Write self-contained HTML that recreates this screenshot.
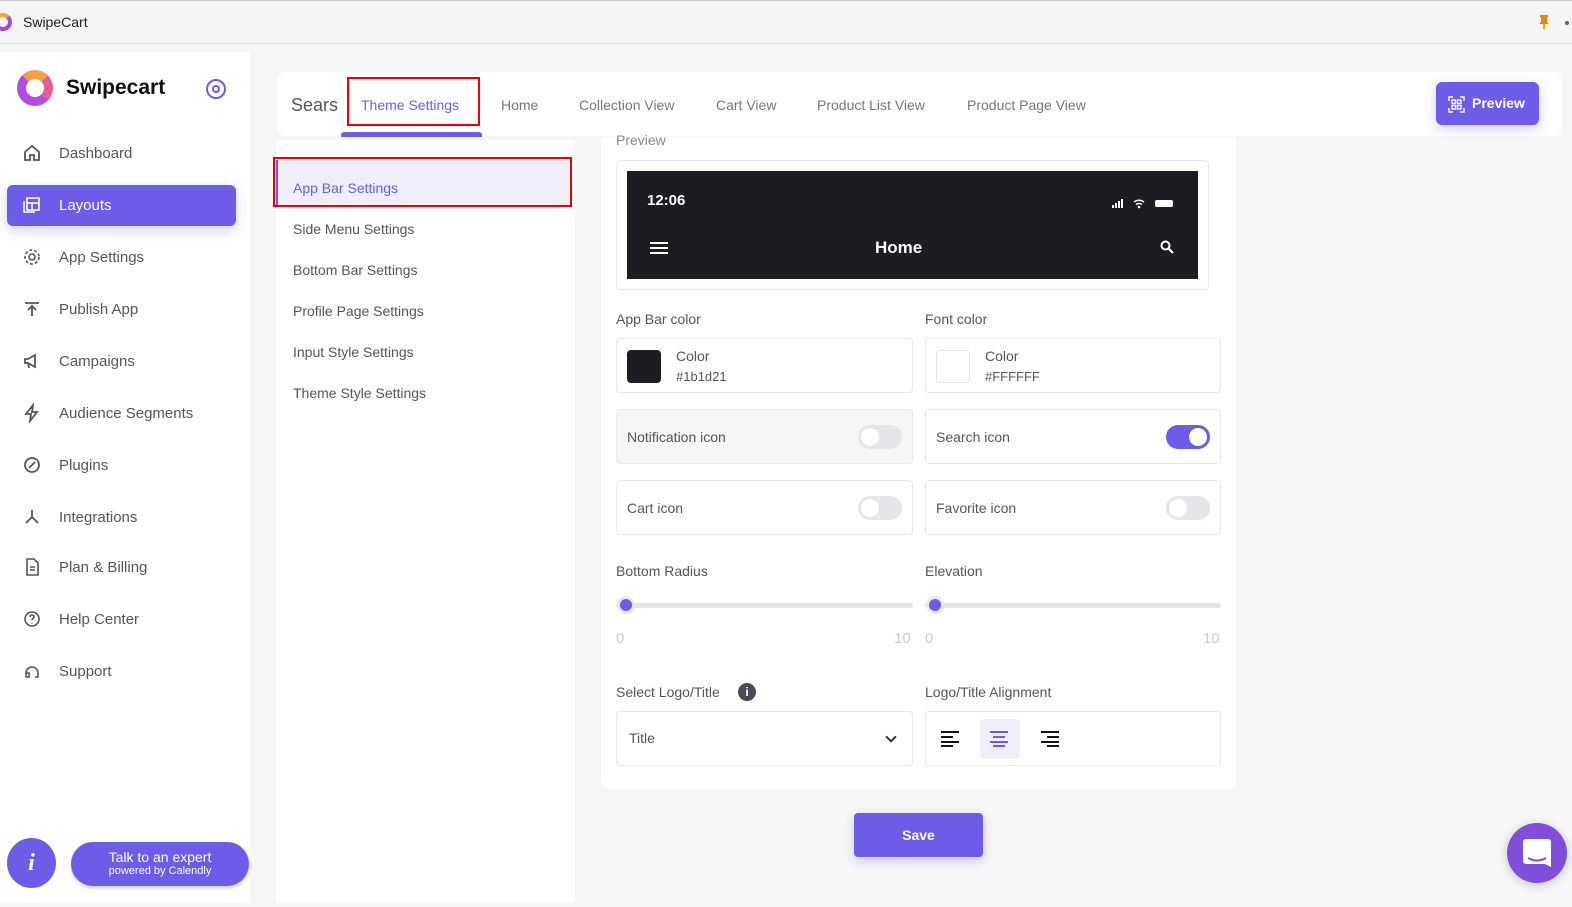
<!DOCTYPE html>
<html><head><meta charset="utf-8"><style>
*{box-sizing:border-box;margin:0;padding:0}
body{width:1572px;height:907px;background:#f6f6f6;font-family:"Liberation Sans",sans-serif;position:relative;overflow:hidden;color:#444}
.abs{position:absolute}
.top{left:0;top:0;width:1572px;height:44px;background:#f4f4f4;border-top:1px solid #ccc;border-bottom:1px solid #ddd}
.side{left:0;top:52px;width:250px;height:851px;background:#fff}
.nav{position:absolute;left:22px;font-size:15px;color:#555;display:flex;align-items:center}
.nav svg{width:20px;height:20px;margin-right:17px}
.lbl{font-size:14px;color:#555}
.box{position:absolute;border:1px solid #e8e8ee;border-radius:4px;background:#fff}
.tog{position:absolute;width:44px;height:24px;border-radius:12px;background:#e5e5ea}
.tog:after{content:"";position:absolute;left:3px;top:3px;width:18px;height:18px;border-radius:50%;background:#fff}
.tog.on{background:#6c5ce7}.tog.on:after{left:23px}
.sub{position:absolute;left:293px;font-size:14px;color:#555}
</style></head><body>
<div class="abs top">
<div class="abs" style="left:-6px;top:12px;width:18px;height:18px;border-radius:50%;border:4px solid #9b4de0;border-top-color:#f5a623"></div>
<div class="abs" style="left:23px;top:13px;font-size:14px;color:#222">SwipeCart</div>
<svg class="abs" style="left:1538px;top:13px" width="14" height="16"><path d="M2 1h8v2l-1 1v4l2 2H1l2-2V4L2 3z" fill="#e08a00"/><path d="M6 10v5" stroke="#e08a00" stroke-width="1.5"/></svg>
<div class="abs" style="left:1565px;top:20px;width:4px;height:4px;border-radius:50%;background:#666"></div>
</div>
<div class="abs side">
<div class="abs" style="left:17px;top:18px;width:36px;height:36px;border-radius:50%;border:9px solid #b04de0;border-top-color:#f4a04a;border-right-color:#e25d9a"></div>
<div class="abs" style="left:66px;top:24px;font-size:21px;font-weight:bold;color:#111">Swipecart</div>
<div class="abs" style="left:206px;top:27px;width:20px;height:20px;border-radius:50%;border:2px solid #6c5ce7"><div style="margin:4px;width:8px;height:8px;border-radius:50%;border:2px solid #6c5ce7"></div></div>
<div class="abs" style="left:7px;top:133px;width:229px;height:41px;background:#6c5ce7;border-radius:6px;box-shadow:0 4px 12px rgba(108,92,231,.3)"></div>
</div>
<div class="nav" style="top:143px"><svg viewBox="0 0 20 20" fill="none" stroke="#555" stroke-width="1.8"><path d="M3 9l7-6 7 6v8h-5v-5H8v5H3z"/></svg>Dashboard</div>
<div class="nav" style="top:195px;color:#fff"><svg viewBox="0 0 20 20" fill="none" stroke="#fff" stroke-width="1.6"><rect x="5" y="3" width="12" height="12"/><path d="M5 8h12M10 8v7M2 6v11h11"/></svg>Layouts</div>
<div class="nav" style="top:247px"><svg viewBox="0 0 20 20" fill="none" stroke="#555" stroke-width="1.6"><circle cx="10" cy="10" r="3"/><circle cx="10" cy="10" r="7" stroke-dasharray="3 2"/></svg>App Settings</div>
<div class="nav" style="top:299px"><svg viewBox="0 0 20 20" fill="none" stroke="#555" stroke-width="1.8"><path d="M3 4h14M10 17V8M6 11l4-4 4 4"/></svg>Publish App</div>
<div class="nav" style="top:351px"><svg viewBox="0 0 20 20" fill="none" stroke="#555" stroke-width="1.8"><path d="M3 8v4h3l7 4V4L6 8zM6 12l1 5"/></svg>Campaigns</div>
<div class="nav" style="top:403px"><svg viewBox="0 0 20 20" fill="none" stroke="#555" stroke-width="1.8"><path d="M11 2L4 11h5l-1 7 7-9h-5z"/></svg>Audience Segments</div>
<div class="nav" style="top:455px"><svg viewBox="0 0 20 20" fill="none" stroke="#555" stroke-width="1.8"><circle cx="10" cy="10" r="7"/><path d="M7 13l6-6"/></svg>Plugins</div>
<div class="nav" style="top:507px"><svg viewBox="0 0 20 20" fill="none" stroke="#555" stroke-width="1.8"><path d="M10 3v7M10 10l-6 6M10 10l6 6"/></svg>Integrations</div>
<div class="nav" style="top:557px"><svg viewBox="0 0 20 20" fill="none" stroke="#555" stroke-width="1.6"><path d="M5 2h7l4 4v12H5zM8 10h5M8 13h5"/></svg>Plan &amp; Billing</div>
<div class="nav" style="top:609px"><svg viewBox="0 0 20 20" fill="none" stroke="#555" stroke-width="1.6"><circle cx="10" cy="10" r="7"/><path d="M8 8a2 2 0 114 0c0 1.5-2 1.5-2 3M10 14v.5"/></svg>Help Center</div>
<div class="nav" style="top:661px"><svg viewBox="0 0 20 20" fill="none" stroke="#555" stroke-width="1.6"><path d="M4 12a6 6 0 0112 0M4 12v4h3v-4zM16 12v4h-3"/></svg>Support</div>
<div class="abs" style="left:7px;top:838px;width:49px;height:50px;border-radius:50%;background:#6c5ce7;color:#fff;font:italic bold 24px 'Liberation Serif',serif;text-align:center;line-height:50px">i</div>
<div class="abs" style="left:71px;top:842px;width:178px;height:44px;border-radius:22px;background:#6c5ce7;color:#fff;text-align:center;box-shadow:0 2px 4px rgba(0,0,0,.2)"><div style="font-size:14px;margin-top:7px">Talk to an expert</div><div style="font-size:11px">powered by Calendly</div></div>

<div class="abs" style="left:277px;top:72px;width:1285px;height:64px;background:#fff;border-radius:8px"></div>
<div class="abs" style="left:291px;top:95px;font-size:18px;color:#555">Sears</div>
<div class="abs" style="left:347px;top:77px;width:133px;height:49px;border:2px solid #e00"></div>
<div class="abs" style="left:361px;top:97px;font-size:14px;color:#6c5ce7">Theme Settings</div>
<div class="abs" style="left:341px;top:132px;width:141px;height:5px;background:#6c5ce7;border-radius:3px 3px 0 0"></div>
<div class="abs" style="top:97px;left:501px;font-size:14px;color:#777">Home</div>
<div class="abs" style="top:97px;left:579px;font-size:14px;color:#777">Collection View</div>
<div class="abs" style="top:97px;left:716px;font-size:14px;color:#777">Cart View</div>
<div class="abs" style="top:97px;left:817px;font-size:14px;color:#777">Product List View</div>
<div class="abs" style="top:97px;left:967px;font-size:14px;color:#777">Product Page View</div>
<div class="abs" style="left:1436px;top:82px;width:103px;height:43px;background:#6c5ce7;border-radius:6px;color:#fff;font-size:14px;font-weight:bold;line-height:43px;padding-left:36px;box-shadow:0 4px 12px rgba(108,92,231,.3)">Preview</div>
<svg class="abs" style="left:1448px;top:96px" width="17" height="17" fill="none" stroke="#fff" stroke-width="1.4"><path d="M1 5V1h4M12 1h4v4M16 12v4h-4M5 16H1v-4"/><rect x="4" y="4" width="3.5" height="3.5"/><rect x="9.5" y="4" width="3.5" height="3.5"/><rect x="4" y="9.5" width="3.5" height="3.5"/><rect x="9.5" y="9.5" width="3.5" height="3.5"/></svg>

<div class="abs" style="left:276px;top:140px;width:299px;height:763px;background:#fff"></div>
<div class="abs" style="left:276px;top:160px;width:294px;height:45px;background:#f1eefc;border-left:2px solid #6c5ce7"></div>
<div class="abs" style="left:273px;top:157px;width:299px;height:50px;border:2px solid #e00"></div>
<div class="sub" style="top:180px;color:#6c5ce7">App Bar Settings</div>
<div class="sub" style="top:221px">Side Menu Settings</div>
<div class="sub" style="top:262px">Bottom Bar Settings</div>
<div class="sub" style="top:303px">Profile Page Settings</div>
<div class="sub" style="top:344px">Input Style Settings</div>
<div class="sub" style="top:385px">Theme Style Settings</div>

<div class="abs" style="left:601px;top:137px;width:635px;height:652px;background:#fff;border-radius:0 0 8px 8px"></div>
<div class="abs lbl" style="left:616px;top:132px;color:#888">Preview</div>
<div class="box" style="left:616px;top:160px;width:593px;height:130px"></div>
<div class="abs" style="left:627px;top:171px;width:571px;height:108px;background:#1b1d21;color:#fff">
<div class="abs" style="left:20px;top:21px;font-size:15px;font-weight:bold">12:06</div>
<svg class="abs" style="left:484px;top:25px" width="70" height="14"><g fill="#fff"><rect x="1" y="9" width="2" height="3"/><rect x="4" y="7" width="2" height="5"/><rect x="7" y="5" width="2" height="7"/><rect x="10" y="3" width="2" height="9"/><rect x="44" y="4" width="18" height="7" rx="2"/></g><path d="M23 6a8 8 0 0110 0M25 8.5a5 5 0 016 0" stroke="#fff" stroke-width="1.5" fill="none"/><circle cx="28" cy="11" r="1.3" fill="#fff"/></svg>
<div class="abs" style="left:23px;top:76px;width:18px;height:2px;background:#fff;box-shadow:0 -5px 0 #fff,0 5px 0 #fff"></div>
<div class="abs" style="left:248px;top:67px;font-size:17px;font-weight:bold">Home</div>
<svg class="abs" style="left:533px;top:69px" width="14" height="14" fill="none" stroke="#fff" stroke-width="2"><circle cx="5.5" cy="5.5" r="4"/><path d="M8.5 8.5l4.5 4.5"/></svg>
</div>
<div class="abs lbl" style="left:616px;top:311px">App Bar color</div>
<div class="abs lbl" style="left:925px;top:311px">Font color</div>
<div class="box" style="left:616px;top:338px;width:297px;height:55px"></div>
<div class="abs" style="left:627px;top:350px;width:34px;height:33px;background:#1b1d21;border-radius:4px"></div>
<div class="abs lbl" style="left:676px;top:348px">Color</div><div class="abs" style="left:676px;top:369px;font-size:13px;color:#555">#1b1d21</div>
<div class="box" style="left:925px;top:338px;width:296px;height:55px"></div>
<div class="abs" style="left:936px;top:350px;width:34px;height:33px;border:1px solid #e4e4e8;border-radius:4px"></div>
<div class="abs lbl" style="left:985px;top:348px">Color</div><div class="abs" style="left:985px;top:369px;font-size:13px;color:#555">#FFFFFF</div>
<div class="box" style="left:616px;top:409px;width:297px;height:55px;background:#f5f5f6"></div>
<div class="abs lbl" style="left:627px;top:429px">Notification icon</div><div class="tog" style="left:858px;top:425px"></div>
<div class="box" style="left:925px;top:409px;width:296px;height:55px"></div>
<div class="abs lbl" style="left:936px;top:429px">Search icon</div><div class="tog on" style="left:1166px;top:425px"></div>
<div class="box" style="left:616px;top:480px;width:297px;height:55px"></div>
<div class="abs lbl" style="left:627px;top:500px">Cart icon</div><div class="tog" style="left:858px;top:496px"></div>
<div class="box" style="left:925px;top:480px;width:296px;height:55px"></div>
<div class="abs lbl" style="left:936px;top:500px">Favorite icon</div><div class="tog" style="left:1166px;top:496px"></div>
<div class="abs lbl" style="left:616px;top:563px">Bottom Radius</div>
<div class="abs lbl" style="left:925px;top:563px">Elevation</div>
<div class="abs" style="left:616px;top:603px;width:297px;height:5px;background:#e4e4e6;border-radius:3px"></div>
<div class="abs" style="left:925px;top:603px;width:296px;height:5px;background:#e4e4e6;border-radius:3px"></div>
<div class="abs" style="left:617px;top:596px;width:18px;height:18px;border-radius:50%;background:#6c5ce7;border:3px solid #ebe8fc"></div>
<div class="abs" style="left:926px;top:596px;width:18px;height:18px;border-radius:50%;background:#6c5ce7;border:3px solid #ebe8fc"></div>
<div class="abs" style="left:616px;top:630px;font-size:15px;color:#ccc">0</div>
<div class="abs" style="left:894px;top:630px;font-size:15px;color:#ccc">10</div>
<div class="abs" style="left:925px;top:630px;font-size:15px;color:#ccc">0</div>
<div class="abs" style="left:1203px;top:630px;font-size:15px;color:#ccc">10</div>
<div class="abs lbl" style="left:616px;top:684px">Select Logo/Title</div>
<div class="abs" style="left:738px;top:683px;width:18px;height:18px;border-radius:50%;background:#4a4a5a;color:#fff;font-size:12px;font-weight:bold;text-align:center;line-height:18px">i</div>
<div class="abs lbl" style="left:925px;top:684px">Logo/Title Alignment</div>
<div class="box" style="left:616px;top:711px;width:297px;height:55px"></div>
<div class="abs lbl" style="left:629px;top:730px">Title</div>
<div class="abs" style="left:887px;top:733px;width:8px;height:8px;border-right:2px solid #333;border-bottom:2px solid #333;transform:rotate(45deg)"></div>
<div class="box" style="left:925px;top:711px;width:296px;height:55px"></div>
<div class="abs" style="left:980px;top:719px;width:40px;height:40px;background:#f1eefc;border-radius:4px"></div>
<svg class="abs" style="left:940px;top:731px" width="120" height="16"><g stroke="#111" stroke-width="2"><path d="M1 1h18M1 6h12M1 11h18M1 15h12"/><path d="M101 1h18M107 6h12M101 11h18M107 15h12"/></g><g stroke="#6c5ce7" stroke-width="2"><path d="M50 1h18M53 6h12M50 11h18M53 15h12"/></g></svg>
<div class="abs" style="left:854px;top:813px;width:129px;height:44px;background:#6c5ce7;border-radius:4px;color:#fff;font-size:14px;font-weight:bold;text-align:center;line-height:44px;box-shadow:0 4px 10px rgba(108,92,231,.3)">Save</div>
<div class="abs" style="left:1507px;top:823px;width:60px;height:60px;border-radius:50%;background:#7f4fd9;box-shadow:0 2px 10px rgba(0,0,0,.2)">
<svg style="position:absolute;left:16px;top:16px" width="30" height="30"><path d="M3 0h22a3 3 0 013 3v25l-6-3H3a3 3 0 01-3-3V3a3 3 0 013-3z" fill="#fff"/><path d="M5 19q9 5 18 0" stroke="#7f4fd9" stroke-width="2" fill="none"/></svg></div>
</body></html>
